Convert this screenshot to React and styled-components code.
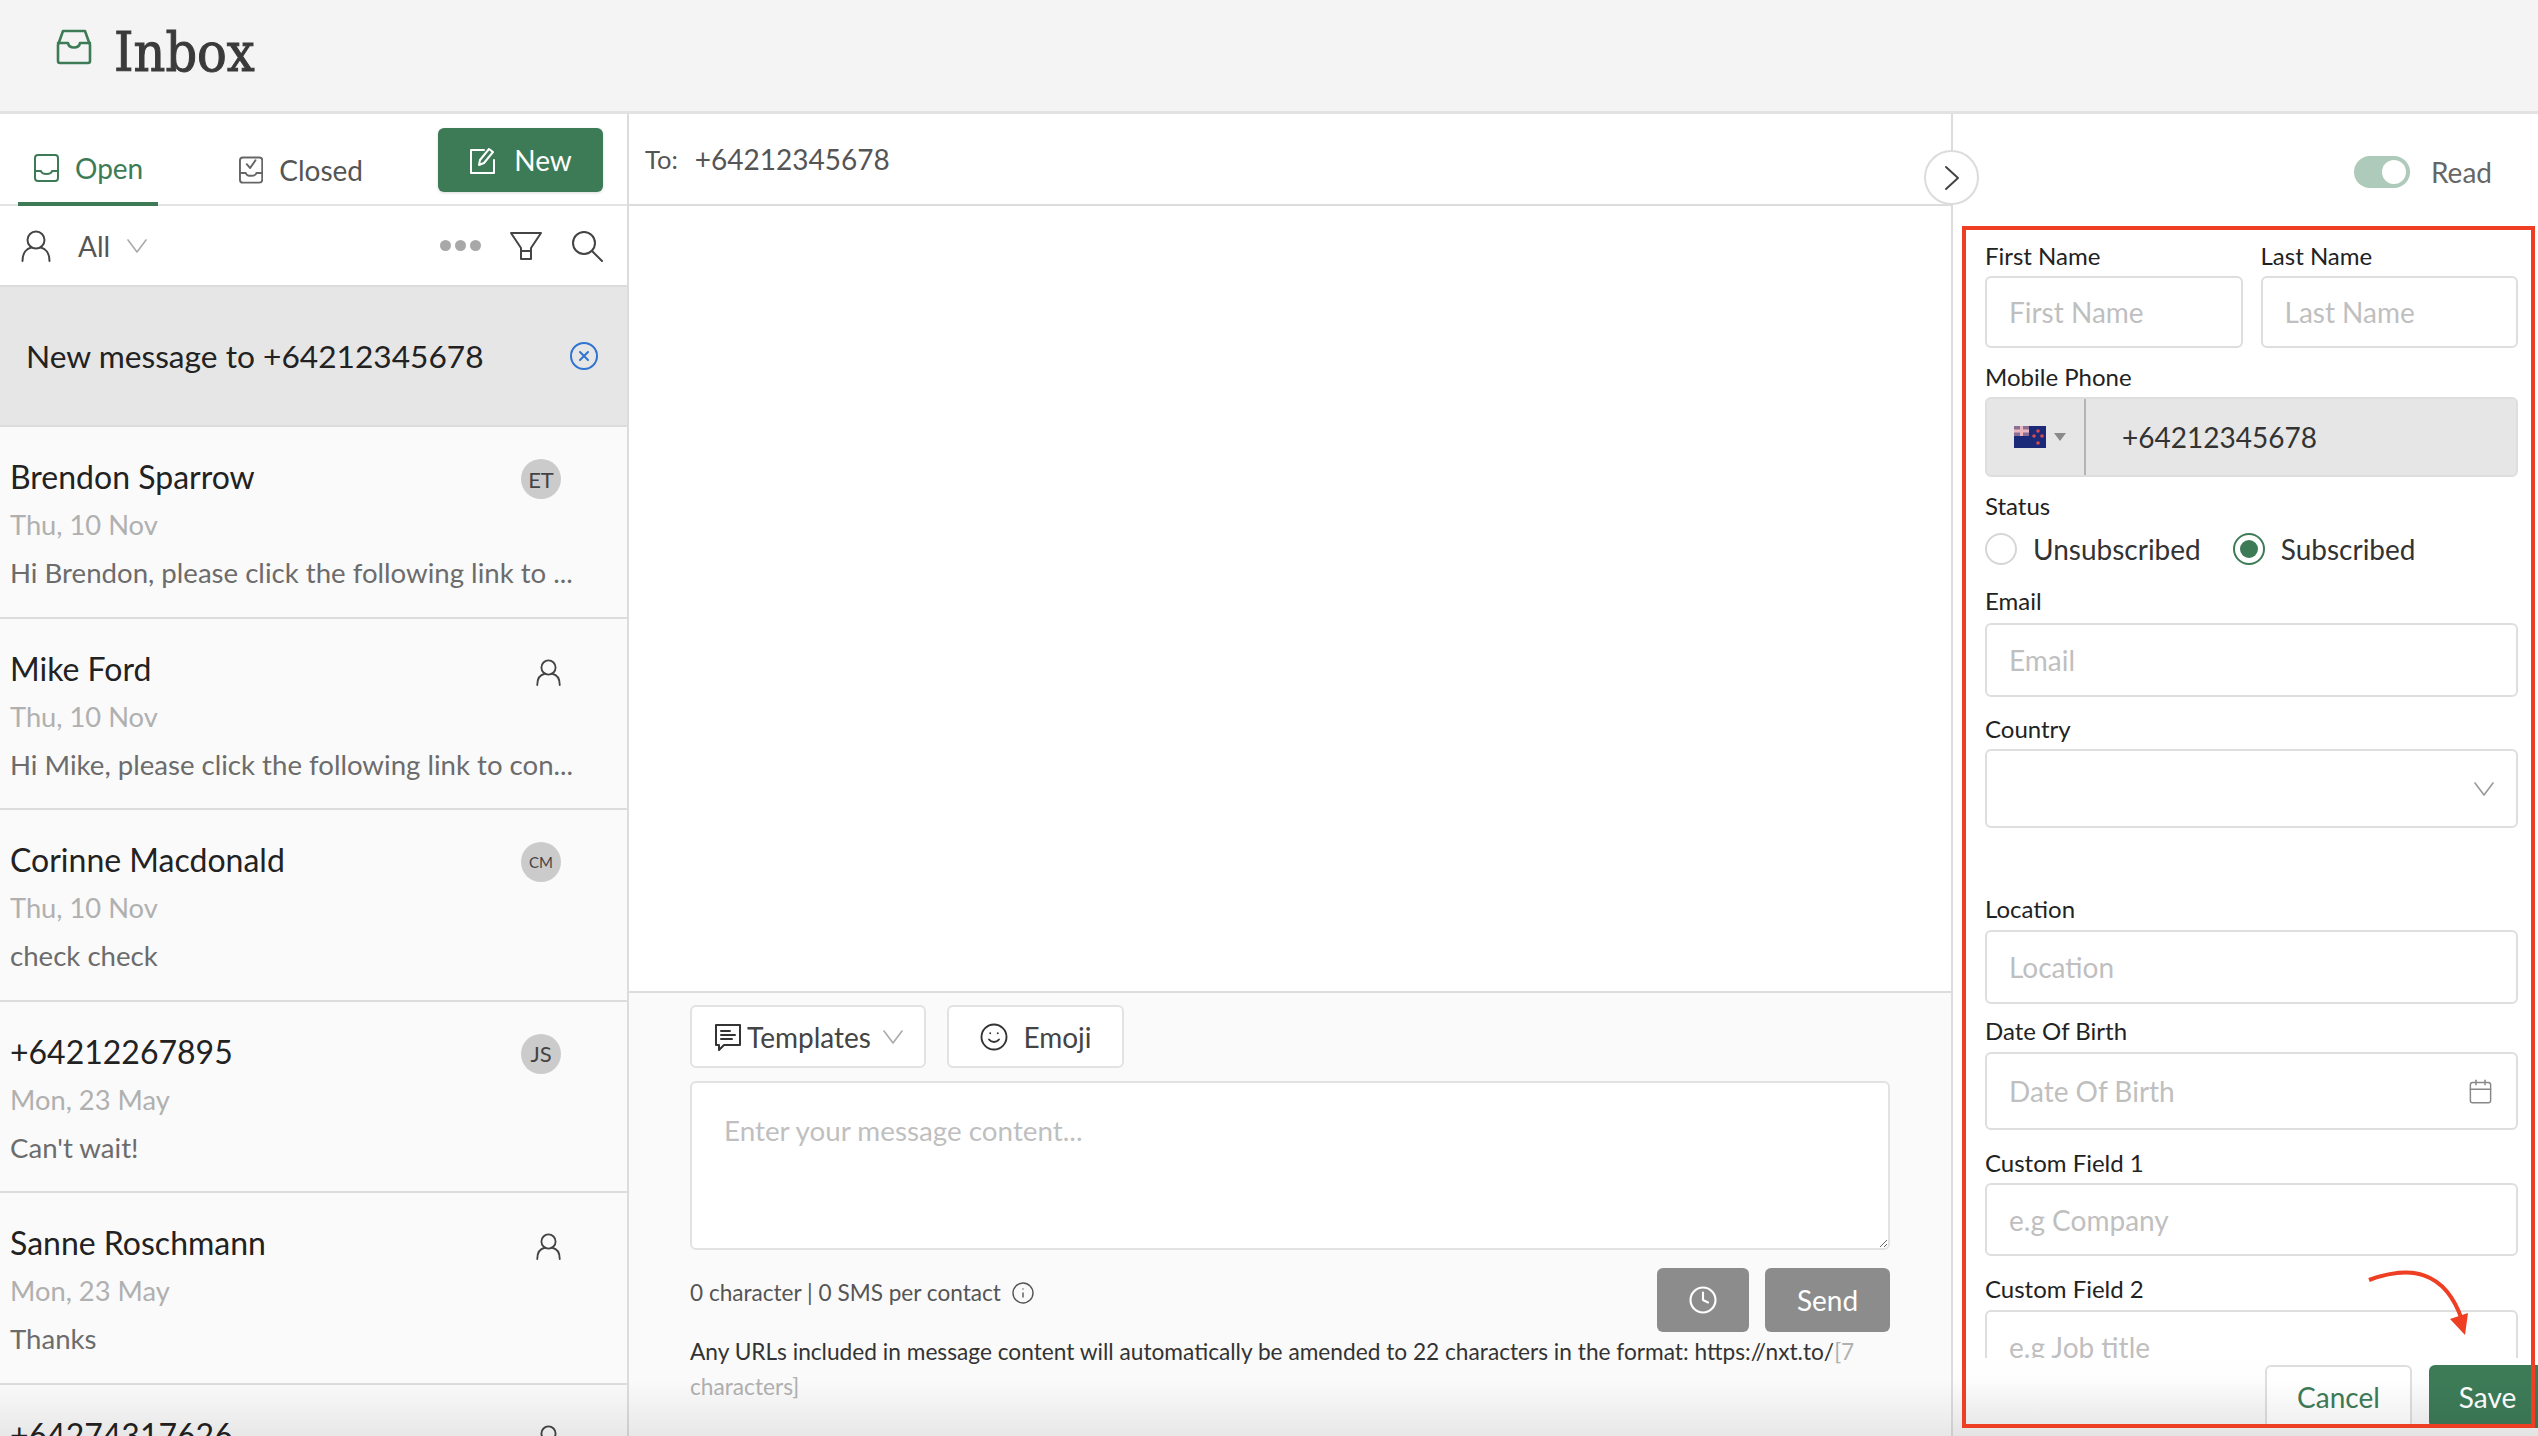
import React from "react";
import styled, { createGlobalStyle } from "styled-components";
import { Calendar, Clock, Info, Smile } from "lucide-react";

const GREEN = "#3d7b57";
const LINE = "#dcdcdc";

const Global = createGlobalStyle`
  html, body { margin: 0; padding: 0; background: #fff; }
  * { box-sizing: border-box; }
  body { font-family: Lato, "Liberation Sans", sans-serif; color: #222; }
  input::placeholder, textarea::placeholder { color: #bfbfbf; opacity: 1; }
`;

const Page = styled.div`
  position: relative;
  width: 2538px;
  height: 1436px;
  overflow: hidden;
  display: flex;
  flex-direction: column;
`;
const Header = styled.header`
  height: 114px;
  flex: none;
  display: flex;
  align-items: flex-start;
  background: #f4f4f4;
  border-bottom: 3px solid #e2e2e2;
  padding: 29px 0 0 56px;
  gap: 22px;
`;
const Title = styled.h1`
  margin: -12px 0 0;
  font-family: "DejaVu Serif Condensed", "DejaVu Serif", serif;
  font-stretch: condensed;
  font-size: 55px;
  line-height: 70px;
  font-weight: 400;
  color: #3a3a3a;
  -webkit-text-stroke: 1px #3a3a3a;
`;
const Body = styled.div`
  flex: 1;
  display: flex;
  min-height: 0;
`;

/* left column */
const Left = styled.aside`
  width: 629px;
  flex: none;
  display: flex;
  flex-direction: column;
  border-right: 2px solid ${LINE};
  overflow: hidden;
`;
const TabsRow = styled.div`
  height: 92px;
  flex: none;
  display: flex;
  border-bottom: 2px solid #e4e4e4;
`;
const Tab = styled.div`
  width: 140px;
  height: 92px;
  margin-left: ${(p) => p.$ml}px;
  padding: 20px 0 0 16px;
  display: flex;
  align-items: center;
  gap: 16px;
  font-size: 28px;
  color: ${(p) => (p.$active ? GREEN : "#555")};
  border-bottom: ${(p) => (p.$active ? `4px solid ${GREEN}` : "none")};
`;
const NewButton = styled.button`
  margin: 14px 24px 0 auto;
  width: 165px;
  height: 64px;
  border: none;
  border-radius: 6px;
  background: ${GREEN};
  color: #fff;
  font: inherit;
  font-size: 28px;
  display: flex;
  align-items: center;
  justify-content: center;
  gap: 18px;
  box-shadow: 0 1px 3px rgba(0, 0, 0, 0.15);
`;
const FilterRow = styled.div`
  height: 81px;
  flex: none;
  display: flex;
  align-items: center;
  padding: 0 24px 0 21px;
  border-bottom: 2px solid ${LINE};
  font-size: 28px;
  color: #555;
`;
const AllLabel = styled.span`
  margin: 0 17px 0 27px;
`;
const FilterTools = styled.div`
  margin-left: auto;
  display: flex;
  align-items: center;
  gap: 29px;
`;
const Dots = styled.div`
  display: flex;
  gap: 4px;
  span {
    width: 11px;
    height: 11px;
    border-radius: 50%;
    background: #a8a8a8;
  }
`;
const DraftRow = styled.div`
  height: 140px;
  flex: none;
  display: flex;
  align-items: center;
  justify-content: space-between;
  padding: 0 29px 0 26px;
  background: #e6e6e6;
  border-bottom: 2px solid ${LINE};
  font-size: 31.7px;
  color: #222;
`;
const Row = styled.div`
  height: 191.5px;
  flex: none;
  padding: 30px 66px 0 10px;
  background: #fafafa;
  border-bottom: 2px solid ${LINE};
`;
const RowTop = styled.div`
  display: flex;
  justify-content: space-between;
  align-items: flex-start;
  height: 40px;
`;
const Name = styled.div`
  font-size: 32px;
  line-height: 40px;
  color: #222;
`;
const RowDate = styled.div`
  margin-top: 10px;
  font-size: 27.3px;
  line-height: 36px;
  color: #b0b0b0;
`;
const Preview = styled.div`
  margin-top: 12px;
  font-size: 27.6px;
  line-height: 36px;
  color: #6c6c6c;
  white-space: nowrap;
`;
const Avatar = styled.div`
  width: 40px;
  height: 40px;
  margin-top: 2px;
  border-radius: 50%;
  background: #cbcbcb;
  color: #444;
  font-size: ${(p) => (p.$small ? 15 : 22)}px;
  display: flex;
  align-items: center;
  justify-content: center;
`;
const RowUser = styled.div`
  margin-top: 10px;
  height: 25px;
`;

/* middle column */
const Middle = styled.main`
  flex: 1;
  min-width: 0;
  display: flex;
  flex-direction: column;
  border-right: 2px solid ${LINE};
`;
const ToRow = styled.div`
  height: 92px;
  flex: none;
  display: flex;
  align-items: center;
  padding: 0 0 0 16px;
  gap: 17px;
  border-bottom: 2px solid ${LINE};
  font-size: 28px;
  color: #555;
  small {
    font-size: 25.5px;
  }
`;
const Thread = styled.div`
  flex: 1;
  background: #fff;
`;
const Composer = styled.div`
  height: 445px;
  flex: none;
  padding: 12px 61px 0 61px;
  background: #fafafa;
  border-top: 2px solid ${LINE};
`;
const Toolbar = styled.div`
  display: flex;
  gap: 21px;
`;
const ToolButton = styled.button`
  height: 63px;
  width: ${(p) => p.$w}px;
  padding: 0;
  display: flex;
  align-items: center;
  justify-content: center;
  gap: ${(p) => p.$gap}px;
  border: 2px solid #e2e2e2;
  border-radius: 6px;
  background: #fff;
  font: inherit;
  font-size: 28px;
  color: #444;
`;
const Spacer = styled.span`
  width: 4px;
`;
const Message = styled.textarea`
  display: block;
  width: 100%;
  height: 169px;
  margin-top: 13px;
  padding: 28px 32px;
  border: 2px solid #e2e2e2;
  border-radius: 6px;
  background: #fff;
  outline: none;
  resize: vertical;
  font: inherit;
  font-size: 27.8px;
  line-height: 40px;
`;
const MetaRow = styled.div`
  display: flex;
  justify-content: space-between;
  align-items: flex-start;
  margin-top: 18px;
`;
const Counter = styled.div`
  display: flex;
  align-items: center;
  gap: 10px;
  margin-top: 9px;
  font-size: 22.6px;
  line-height: 32px;
  color: #555;
`;
const MetaButtons = styled.div`
  display: flex;
  gap: 16px;
`;
const GreyButton = styled.button`
  width: ${(p) => p.$w}px;
  height: 64px;
  border: none;
  border-radius: 6px;
  background: #8c8c8c;
  color: #fff;
  font: inherit;
  font-size: 28px;
  display: flex;
  align-items: center;
  justify-content: center;
`;
const Notice = styled.p`
  margin: 2px 0 0;
  font-size: 22.7px;
  line-height: 35px;
  color: #333;
  span {
    color: #b0b0b0;
  }
`;

/* right column */
const Right = styled.section`
  width: 585px;
  flex: none;
  display: flex;
  flex-direction: column;
  background: #fff;
`;
const RightTop = styled.div`
  height: 116px;
  flex: none;
  display: flex;
  align-items: center;
  justify-content: flex-end;
  gap: 21px;
  padding: 0 46px 0 0;
  font-size: 28px;
  color: #666;
`;
const Toggle = styled.div`
  position: relative;
  width: 56px;
  height: 32px;
  border-radius: 16px;
  background: #aecabb;
  &::after {
    content: "";
    position: absolute;
    top: 4px;
    right: 4px;
    width: 24px;
    height: 24px;
    border-radius: 50%;
    background: #fff;
  }
`;
const Collapse = styled.div`
  position: absolute;
  left: 1924px;
  top: 150px;
  width: 55px;
  height: 55px;
  border-radius: 50%;
  border: 2px solid ${LINE};
  background: #fff;
  display: flex;
  align-items: center;
  justify-content: center;
`;
const Form = styled.div`
  flex: 1;
  min-height: 0;
  overflow: hidden;
  padding: 14px 20px 0 32px;
`;
const Field = styled.div`
  margin-top: ${(p) => p.$mt || 0}px;
`;
const Label = styled.div`
  font-size: 24px;
  line-height: 24px;
  color: #222;
`;
const TextInput = styled.input`
  display: block;
  width: 100%;
  height: ${(p) => p.$h || 74}px;
  margin-top: ${(p) => p.$gap || 9}px;
  padding: 0 22px;
  border: 2px solid #dedede;
  border-radius: 6px;
  outline: none;
  background: #fff;
  font: inherit;
  font-size: 28px;
`;
const NameRow = styled.div`
  display: grid;
  grid-template-columns: 1fr 1fr;
  gap: 18px;
`;
const PhoneBox = styled.div`
  height: 80px;
  margin-top: 8px;
  display: flex;
  align-items: center;
  background: #e6e6e6;
  border: 2px solid #dedede;
  border-radius: 6px;
  font-size: 28px;
  color: #333;
`;
const FlagCell = styled.div`
  width: 99px;
  height: 100%;
  flex: none;
  display: flex;
  align-items: center;
  gap: 8px;
  padding-left: 27px;
  border-right: 2px solid #b4b4b4;
`;
const Caret = styled.span`
  width: 0;
  height: 0;
  border-left: 6px solid transparent;
  border-right: 6px solid transparent;
  border-top: 8px solid #8a8a8a;
`;
const PhoneValue = styled.span`
  padding-left: 36px;
`;
const RadioRow = styled.div`
  display: flex;
  align-items: center;
  margin-top: 14px;
  font-size: 28px;
  color: #333;
`;
const RadioDot = styled.span`
  width: 32px;
  height: 32px;
  flex: none;
  margin-right: 16px;
  border-radius: 50%;
  border: 2px solid ${(p) => (p.$on ? GREEN : "#d6d6d6")};
  display: flex;
  align-items: center;
  justify-content: center;
  &::after {
    content: "";
    width: 18px;
    height: 18px;
    border-radius: 50%;
    background: ${(p) => (p.$on ? GREEN : "transparent")};
  }
`;
const RadioText = styled.span`
  margin-right: 32px;
`;
const Box = styled.div`
  height: ${(p) => p.$h}px;
  margin-top: ${(p) => p.$gap}px;
  padding: 0 22px;
  display: flex;
  align-items: center;
  justify-content: space-between;
  border: 2px solid #dedede;
  border-radius: 6px;
  font-size: 28px;
  color: #bfbfbf;
`;
const Footer = styled.div`
  height: 78px;
  flex: none;
  display: flex;
  justify-content: flex-end;
  gap: 17px;
  padding: 7px 0 0;
  background: linear-gradient(#fff, #f6f6f6);
  overflow: hidden;
`;
const Cancel = styled.button`
  width: 147px;
  height: 63px;
  border: 2px solid #dedede;
  border-radius: 6px;
  background: #fff;
  color: ${GREEN};
  font: inherit;
  font-size: 28px;
`;
const Save = styled.button`
  width: 109px;
  height: 63px;
  padding: 0 0 0 8px;
  border: none;
  border-radius: 6px 0 0 6px;
  background: ${GREEN};
  color: #fff;
  font: inherit;
  font-size: 28px;
`;

/* overlays */
const RedFrame = styled.div`
  position: absolute;
  left: 1962px;
  top: 226px;
  width: 573px;
  height: 1202px;
  border: 4px solid #ee3f24;
  pointer-events: none;
`;
const RedArrow = styled.svg`
  position: absolute;
  left: 2360px;
  top: 1265px;
  width: 120px;
  height: 80px;
`;
const BottomFade = styled.div`
  position: absolute;
  left: 0;
  right: 0;
  bottom: 0;
  height: 56px;
  background: linear-gradient(rgba(0, 0, 0, 0), rgba(0, 0, 0, 0.075));
  pointer-events: none;
`;

const Line = ({ w, h, stroke = "#555", sw = 2, children, vb }) => (
  <svg width={w} height={h} viewBox={vb || `0 0 ${w} ${h}`} fill="none" stroke={stroke} strokeWidth={sw} strokeLinecap="round" strokeLinejoin="round">
    {children}
  </svg>
);

const UserIcon = ({ w, h, sw = 2, stroke = "#444" }) => (
  <Line w={w} h={h} vb="0 0 30 32" sw={sw} stroke={stroke}>
    <circle cx="15" cy="10" r="8.5" />
    <path d="M1.5 31c0-8 4-12.5 9-13.5M28.5 31c0-8-4-12.5-9-13.5" />
  </Line>
);

const Chevron = ({ w = 20, h = 14, stroke = "#aaa" }) => (
  <Line w={w} h={h} stroke={stroke} sw={1.6}>
    <path d={`M1 1 L${w / 2} ${h - 1} L${w - 1} 1`} />
  </Line>
);

const TrayIcon = ({ check, stroke }) => (
  <Line w={25} h={28} stroke={stroke} sw={2}>
    <rect x="1" y="1" width="23" height="26" rx="3" />
    <path d="M1 17h6c1 4 10 4 11 0h6" />
    {check && <path d="M8 8l3.5 4L17 4" />}
  </Line>
);

const FlagNZ = () => (
  <svg width="32" height="22" viewBox="0 0 32 22">
    <rect width="32" height="22" fill="#1b2a78" />
    <rect width="15" height="10" fill="#8d6f96" />
    <path d="M0 5h15M7.5 0v10" stroke="#e9b7bd" strokeWidth="3" />
    <g fill="#d94a4a">
      <circle cx="24" cy="5" r="1.8" />
      <circle cx="20" cy="10" r="1.8" />
      <circle cx="28" cy="10" r="1.8" />
      <circle cx="24" cy="17" r="1.8" />
    </g>
  </svg>
);

const conversations = [
  { name: "Brendon Sparrow", date: "Thu, 10 Nov", text: "Hi Brendon, please click the following link to ...", initials: "ET" },
  { name: "Mike Ford", date: "Thu, 10 Nov", text: "Hi Mike, please click the following link to con..." },
  { name: "Corinne Macdonald", date: "Thu, 10 Nov", text: "check check", initials: "CM", small: true },
  { name: "+64212267895", date: "Mon, 23 May", text: "Can't wait!", initials: "JS" },
  { name: "Sanne Roschmann", date: "Mon, 23 May", text: "Thanks" },
  { name: "+64274317626", date: "Mon, 23 May", text: "" },
];

export default function App() {
  return (
    <Page>
      <Global />
      <Header>
        <Line w={36} h={36} stroke={GREEN} sw={2.6}>
          <path d="M2 16 L7 2h22l5 14v16a2 2 0 0 1-2 2H4a2 2 0 0 1-2-2z" />
          <path d="M2 14h10c1 6 11 6 12 0h10" />
        </Line>
        <Title>Inbox</Title>
      </Header>
      <Body>
        <Left>
          <TabsRow>
            <Tab $active $ml={18}>
              <TrayIcon stroke={GREEN} />
              Open
            </Tab>
            <Tab $ml={65}>
              <TrayIcon check stroke="#666" />
              Closed
            </Tab>
            <NewButton>
              <Line w={27} h={27} stroke="#fff" sw={2}>
                <path d="M15 3H2v23h23V13" />
                <path d="M10 18l1-5L20 2l4 3-9 11z" />
              </Line>
              New
            </NewButton>
          </TabsRow>
          <FilterRow>
            <UserIcon w={30} h={32} />
            <AllLabel>All</AllLabel>
            <Chevron />
            <FilterTools>
              <Dots>
                <span />
                <span />
                <span />
              </Dots>
              <Line w={32} h={30} stroke="#444" sw={2}>
                <path d="M1 2h30L21 17v11h-10V17z" />
                <path d="M11 20h10" />
              </Line>
              <Line w={32} h={32} stroke="#444" sw={2}>
                <circle cx="13" cy="13" r="11" />
                <path d="M21 21l10 10" />
              </Line>
            </FilterTools>
          </FilterRow>
          <DraftRow>
            New message to +64212345678
            <Line w={28} h={28} stroke="#2f74d0" sw={2}>
              <circle cx="14" cy="14" r="13" />
              <path d="M10 10l8 8M18 10l-8 8" />
            </Line>
          </DraftRow>
          {conversations.map((c) => (
            <Row key={c.name}>
              <RowTop>
                <Name>{c.name}</Name>
                {c.initials ? (
                  <Avatar $small={c.small}>{c.initials}</Avatar>
                ) : (
                  <RowUser>
                    <UserIcon w={25} h={27} sw={2.2} />
                  </RowUser>
                )}
              </RowTop>
              <RowDate>{c.date}</RowDate>
              <Preview>{c.text}</Preview>
            </Row>
          ))}
        </Left>
        <Middle>
          <ToRow>
            <small>To:</small>
            +64212345678
          </ToRow>
          <Thread />
          <Composer>
            <Toolbar>
              <ToolButton $w={236} $gap={4}>
                <Line w={30} h={30} stroke="#333" sw={2}>
                  <path d="M3 3h24v20H11l-5 5v-5H3z" />
                  <path d="M8 9h9M8 13h14M8 17h11" />
                </Line>
                Templates
                <Spacer />
                <Chevron />
              </ToolButton>
              <ToolButton $w={177} $gap={14}>
                <Smile size={30} strokeWidth={1.5} color="#333" />
                Emoji
              </ToolButton>
            </Toolbar>
            <Message placeholder="Enter your message content..." />
            <MetaRow>
              <Counter>
                0 character | 0 SMS per contact
                <Info size={24} strokeWidth={1.4} color="#555" />
              </Counter>
              <MetaButtons>
                <GreyButton $w={92}>
                  <Clock size={30} strokeWidth={1.7} color="#fff" />
                </GreyButton>
                <GreyButton $w={125}>Send</GreyButton>
              </MetaButtons>
            </MetaRow>
            <Notice>
              Any URLs included in message content will automatically be amended to 22 characters in the format: https://nxt.to/<span>[7 characters]</span>
            </Notice>
          </Composer>
        </Middle>
        <Right>
          <RightTop>
            <Toggle />
            Read
          </RightTop>
          <Form>
            <NameRow>
              <Field>
                <Label>First Name</Label>
                <TextInput $h={72} $gap={8} placeholder="First Name" />
              </Field>
              <Field>
                <Label>Last Name</Label>
                <TextInput $h={72} $gap={8} placeholder="Last Name" />
              </Field>
            </NameRow>
            <Field $mt={17}>
              <Label>Mobile Phone</Label>
              <PhoneBox>
                <FlagCell>
                  <FlagNZ />
                  <Caret />
                </FlagCell>
                <PhoneValue>+64212345678</PhoneValue>
              </PhoneBox>
            </Field>
            <Field $mt={17}>
              <Label>Status</Label>
              <RadioRow>
                <RadioDot />
                <RadioText>Unsubscribed</RadioText>
                <RadioDot $on />
                <span>Subscribed</span>
              </RadioRow>
            </Field>
            <Field $mt={23}>
              <Label>Email</Label>
              <TextInput $gap={10} placeholder="Email" />
            </Field>
            <Field $mt={20}>
              <Label>Country</Label>
              <Box $h={79} $gap={8}>
                <span />
                <Chevron stroke="#999" />
              </Box>
            </Field>
            <Field $mt={69}>
              <Label>Location</Label>
              <TextInput placeholder="Location" />
            </Field>
            <Field $mt={15}>
              <Label>Date Of Birth</Label>
              <Box $h={78} $gap={9}>
                Date Of Birth
                <Calendar size={27} strokeWidth={1.3} color="#888" />
              </Box>
            </Field>
            <Field $mt={21}>
              <Label>Custom Field 1</Label>
              <TextInput $h={73} $gap={8} placeholder="e.g Company" />
            </Field>
            <Field $mt={21}>
              <Label>Custom Field 2</Label>
              <TextInput $gap={9} placeholder="e.g Job title" />
            </Field>
          </Form>
          <Footer>
            <Cancel>Cancel</Cancel>
            <Save>Save</Save>
          </Footer>
        </Right>
      </Body>
      <BottomFade />
      <Collapse>
        <Line w={16} h={26} stroke="#444" sw={2}>
          <path d="M2 2l12 11L2 24" />
        </Line>
      </Collapse>
      <RedFrame />
      <RedArrow viewBox="0 0 120 80" fill="none">
        <path d="M9 15C50 0 85 5 102 55" stroke="#ee3f24" strokeWidth="4" />
        <path d="M90 54l18-6-3 22z" fill="#ee3f24" />
      </RedArrow>
    </Page>
  );
}
